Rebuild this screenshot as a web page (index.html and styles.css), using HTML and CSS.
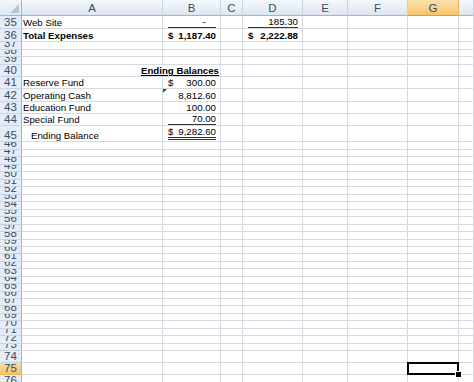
FILE: index.html
```html
<!DOCTYPE html>
<html>
<head>
  <title>Expenses</title>
  <link rel="stylesheet" href="styles.css">
</head>
<body>
  <div class="sheet">
    <div class="row hdr">
      <div class="corner"><svg width="10" height="10" viewBox="0 0 10 10"><polygon points="10,1 10,10 1,10" fill="#b6c6d9"/></svg></div>
      <div class="ch">A</div><div class="ch">B</div><div class="ch">C</div><div class="ch">D</div><div class="ch">E</div><div class="ch">F</div><div class="ch sel">G</div><div class="ch"></div>
    </div>

    <div class="row h13">
      <div class="rh">35</div>
      <div class="c">Web Site</div>
      <div class="c acct"><span class="in ul"><span></span><span class="dash">-</span></span></div>
      <div class="c"></div>
      <div class="c acct"><span class="in ul"><span></span><span>185.30</span></span></div>
      <div class="c"></div><div class="c"></div><div class="c"></div><div class="c"></div>
    </div>
    <div class="row h13 bold">
      <div class="rh">36</div>
      <div class="c">Total Expenses</div>
      <div class="c acct"><span class="in"><span>$</span><span>1,187.40</span></span></div>
      <div class="c"></div>
      <div class="c acct"><span class="in"><span>$</span><span>2,222.88</span></span></div>
      <div class="c"></div><div class="c"></div><div class="c"></div><div class="c"></div>
    </div>
    <div class="row h8"><div class="rh">37</div><div class="c"></div><div class="c"></div><div class="c"></div><div class="c"></div><div class="c"></div><div class="c"></div><div class="c"></div><div class="c"></div></div>
    <div class="row h7"><div class="rh">38</div><div class="c"></div><div class="c"></div><div class="c"></div><div class="c"></div><div class="c"></div><div class="c"></div><div class="c"></div><div class="c"></div></div>
    <div class="row h8"><div class="rh">39</div><div class="c"></div><div class="c"></div><div class="c"></div><div class="c"></div><div class="c"></div><div class="c"></div><div class="c"></div><div class="c"></div></div>
    <div class="row h12">
      <div class="rh">40</div>
      <div class="c spill"></div>
      <div class="c right"><span class="title">Ending Balances</span></div>
      <div class="c"></div><div class="c"></div><div class="c"></div><div class="c"></div><div class="c"></div><div class="c"></div>
    </div>
    <div class="row h12">
      <div class="rh">41</div>
      <div class="c">Reserve Fund</div>
      <div class="c acct"><span class="in"><span>$</span><span>300.00</span></span></div>
      <div class="c"></div><div class="c"></div><div class="c"></div><div class="c"></div><div class="c"></div><div class="c"></div>
    </div>
    <div class="row h13">
      <div class="rh">42</div>
      <div class="c">Operating Cash</div>
      <div class="c acct flag"><span class="in"><span></span><span>8,812.60</span></span></div>
      <div class="c"></div><div class="c"></div><div class="c"></div><div class="c"></div><div class="c"></div><div class="c"></div>
    </div>
    <div class="row h12">
      <div class="rh">43</div>
      <div class="c">Education Fund</div>
      <div class="c acct"><span class="in"><span></span><span>100.00</span></span></div>
      <div class="c"></div><div class="c"></div><div class="c"></div><div class="c"></div><div class="c"></div><div class="c"></div>
    </div>
    <div class="row h12">
      <div class="rh">44</div>
      <div class="c">Special Fund</div>
      <div class="c acct"><span class="in ul"><span></span><span>70.00</span></span></div>
      <div class="c"></div><div class="c"></div><div class="c"></div><div class="c"></div><div class="c"></div><div class="c"></div>
    </div>
    <div class="row h16">
      <div class="rh">45</div>
      <div class="c indent">Ending Balance</div>
      <div class="c acct"><span class="in dbl"><span>$</span><span>9,282.60</span></span></div>
      <div class="c"></div><div class="c"></div><div class="c"></div><div class="c"></div><div class="c"></div><div class="c"></div>
    </div>

    <div class="row h8"><div class="rh">46</div><div class="c"></div><div class="c"></div><div class="c"></div><div class="c"></div><div class="c"></div><div class="c"></div><div class="c"></div><div class="c"></div></div>
    <div class="row h7"><div class="rh">47</div><div class="c"></div><div class="c"></div><div class="c"></div><div class="c"></div><div class="c"></div><div class="c"></div><div class="c"></div><div class="c"></div></div>
    <div class="row h8"><div class="rh">48</div><div class="c"></div><div class="c"></div><div class="c"></div><div class="c"></div><div class="c"></div><div class="c"></div><div class="c"></div><div class="c"></div></div>
    <div class="row h7"><div class="rh">49</div><div class="c"></div><div class="c"></div><div class="c"></div><div class="c"></div><div class="c"></div><div class="c"></div><div class="c"></div><div class="c"></div></div>
    <div class="row h8"><div class="rh">50</div><div class="c"></div><div class="c"></div><div class="c"></div><div class="c"></div><div class="c"></div><div class="c"></div><div class="c"></div><div class="c"></div></div>
    <div class="row h7"><div class="rh">51</div><div class="c"></div><div class="c"></div><div class="c"></div><div class="c"></div><div class="c"></div><div class="c"></div><div class="c"></div><div class="c"></div></div>
    <div class="row h8"><div class="rh">52</div><div class="c"></div><div class="c"></div><div class="c"></div><div class="c"></div><div class="c"></div><div class="c"></div><div class="c"></div><div class="c"></div></div>
    <div class="row h7"><div class="rh">53</div><div class="c"></div><div class="c"></div><div class="c"></div><div class="c"></div><div class="c"></div><div class="c"></div><div class="c"></div><div class="c"></div></div>
    <div class="row h8"><div class="rh">54</div><div class="c"></div><div class="c"></div><div class="c"></div><div class="c"></div><div class="c"></div><div class="c"></div><div class="c"></div><div class="c"></div></div>
    <div class="row h7"><div class="rh">55</div><div class="c"></div><div class="c"></div><div class="c"></div><div class="c"></div><div class="c"></div><div class="c"></div><div class="c"></div><div class="c"></div></div>
    <div class="row h8"><div class="rh">56</div><div class="c"></div><div class="c"></div><div class="c"></div><div class="c"></div><div class="c"></div><div class="c"></div><div class="c"></div><div class="c"></div></div>
    <div class="row h7"><div class="rh">57</div><div class="c"></div><div class="c"></div><div class="c"></div><div class="c"></div><div class="c"></div><div class="c"></div><div class="c"></div><div class="c"></div></div>
    <div class="row h8"><div class="rh">58</div><div class="c"></div><div class="c"></div><div class="c"></div><div class="c"></div><div class="c"></div><div class="c"></div><div class="c"></div><div class="c"></div></div>
    <div class="row h7"><div class="rh">59</div><div class="c"></div><div class="c"></div><div class="c"></div><div class="c"></div><div class="c"></div><div class="c"></div><div class="c"></div><div class="c"></div></div>
    <div class="row h7"><div class="rh">60</div><div class="c"></div><div class="c"></div><div class="c"></div><div class="c"></div><div class="c"></div><div class="c"></div><div class="c"></div><div class="c"></div></div>
    <div class="row h8"><div class="rh">61</div><div class="c"></div><div class="c"></div><div class="c"></div><div class="c"></div><div class="c"></div><div class="c"></div><div class="c"></div><div class="c"></div></div>
    <div class="row h7"><div class="rh">62</div><div class="c"></div><div class="c"></div><div class="c"></div><div class="c"></div><div class="c"></div><div class="c"></div><div class="c"></div><div class="c"></div></div>
    <div class="row h8"><div class="rh">63</div><div class="c"></div><div class="c"></div><div class="c"></div><div class="c"></div><div class="c"></div><div class="c"></div><div class="c"></div><div class="c"></div></div>
    <div class="row h7"><div class="rh">64</div><div class="c"></div><div class="c"></div><div class="c"></div><div class="c"></div><div class="c"></div><div class="c"></div><div class="c"></div><div class="c"></div></div>
    <div class="row h8"><div class="rh">65</div><div class="c"></div><div class="c"></div><div class="c"></div><div class="c"></div><div class="c"></div><div class="c"></div><div class="c"></div><div class="c"></div></div>
    <div class="row h7"><div class="rh">66</div><div class="c"></div><div class="c"></div><div class="c"></div><div class="c"></div><div class="c"></div><div class="c"></div><div class="c"></div><div class="c"></div></div>
    <div class="row h7"><div class="rh">67</div><div class="c"></div><div class="c"></div><div class="c"></div><div class="c"></div><div class="c"></div><div class="c"></div><div class="c"></div><div class="c"></div></div>
    <div class="row h8"><div class="rh">68</div><div class="c"></div><div class="c"></div><div class="c"></div><div class="c"></div><div class="c"></div><div class="c"></div><div class="c"></div><div class="c"></div></div>
    <div class="row h7"><div class="rh">69</div><div class="c"></div><div class="c"></div><div class="c"></div><div class="c"></div><div class="c"></div><div class="c"></div><div class="c"></div><div class="c"></div></div>
    <div class="row h8"><div class="rh">70</div><div class="c"></div><div class="c"></div><div class="c"></div><div class="c"></div><div class="c"></div><div class="c"></div><div class="c"></div><div class="c"></div></div>
    <div class="row h7"><div class="rh">71</div><div class="c"></div><div class="c"></div><div class="c"></div><div class="c"></div><div class="c"></div><div class="c"></div><div class="c"></div><div class="c"></div></div>
    <div class="row h8"><div class="rh">72</div><div class="c"></div><div class="c"></div><div class="c"></div><div class="c"></div><div class="c"></div><div class="c"></div><div class="c"></div><div class="c"></div></div>
    <div class="row h7"><div class="rh">73</div><div class="c"></div><div class="c"></div><div class="c"></div><div class="c"></div><div class="c"></div><div class="c"></div><div class="c"></div><div class="c"></div></div>

    <div class="row h12"><div class="rh">74</div><div class="c"></div><div class="c"></div><div class="c"></div><div class="c"></div><div class="c"></div><div class="c"></div><div class="c"></div><div class="c"></div></div>
    <div class="row h12"><div class="rh sel">75</div><div class="c"></div><div class="c"></div><div class="c"></div><div class="c"></div><div class="c"></div><div class="c"></div><div class="c active"></div><div class="c"></div></div>
    <div class="row h12"><div class="rh">76</div><div class="c"></div><div class="c"></div><div class="c"></div><div class="c"></div><div class="c"></div><div class="c"></div><div class="c"></div><div class="c"></div></div>
  </div>
</body>
</html>
```

FILE: styles.css
```css
html, body {
  margin: 0;
  padding: 0;
  background: #fff;
  overflow: hidden;
}

body {
  font-family: "Liberation Sans", Arial, sans-serif;
  color: #000;
}

.sheet {
  width: 474px;
  height: 382px;
  overflow: hidden;
}

.row {
  display: grid;
  grid-template-columns: 22px 141px 58px 22px 60px 45px 60px 51px 1fr;
}

.row > div {
  box-sizing: border-box;
  display: flex;
  align-items: flex-end;
  overflow: hidden;
  white-space: nowrap;
}

.hdr { height: 16px; }
.h16 { height: 16px; }
.h13 { height: 13px; }
.h12 { height: 12px; }
.h8 { height: 8px; }
.h7 { height: 7px; }

/* headers */
.corner {
  background: linear-gradient(#f3f6fb, #dfe7f2);
  border-right: 1px solid #9eb6ce;
  border-bottom: 1px solid #9eb6ce;
  justify-content: flex-end;
  padding: 0 2px 2px 0;
}

.ch {
  background: linear-gradient(#f5f8fc, #dde6f1);
  border-right: 1px solid #c5d3e4;
  border-bottom: 1px solid #9eb6ce;
  justify-content: center;
  align-items: center !important;
  font-size: 11.5px;
  color: #3c4d62;
}

.ch.sel {
  background: linear-gradient(#fbe1ac, #f4c469);
  border-right-color: #f0b656;
  border-bottom-color: #f29536;
}

.rh {
  background: #e4ecf7;
  border-right: 1px solid #9eb6ce;
  border-bottom: 1px solid #c8d5e6;
  justify-content: center;
  font-size: 11.5px;
  line-height: 12px;
  color: #3c4d62;
}

.rh.sel {
  background: linear-gradient(#fadca4, #f3c56c);
  border-bottom-color: #f0b656;
}

/* cells */
.c {
  border-right: 1px solid #d6dae0;
  border-bottom: 1px solid #d6dae0;
  font-size: 9.7px;
  line-height: 11px;
  padding-left: 1px;
}

.bold .c { font-weight: bold; }

.c.spill {
  border-right-color: transparent;
  overflow: visible;
}

.c.right {
  justify-content: flex-end;
  overflow: visible;
  padding: 0 1px 0 0;
}

.title {
  font-weight: bold;
  text-decoration: underline;
}

.c.indent { padding-left: 9px; }

.acct { padding-left: 0; }

.acct .in {
  flex: 1;
  display: flex;
  justify-content: space-between;
  margin: 0 4px 0 5px;
}

.acct .dash { padding-right: 10px; }

.in.ul { border-bottom: 1px solid #333; }

.in.dbl {
  border-bottom: 3px double #333;
  margin-bottom: 1px;
}

.c.flag { position: relative; overflow: visible; }

.c.flag::before {
  content: "";
  position: absolute;
  left: 0;
  top: 0;
  border-top: 4px solid #1e6b1e;
  border-right: 4px solid transparent;
}

.c.active {
  position: relative;
  overflow: visible;
}

.c.active::before {
  content: "";
  position: absolute;
  left: -1px;
  top: -1px;
  right: -1px;
  bottom: -1px;
  border: 2px solid #000;
}

.c.active::after {
  content: "";
  position: absolute;
  right: -4px;
  bottom: -4px;
  width: 5px;
  height: 5px;
  background: #000;
  border: 1px solid #fff;
}
```
